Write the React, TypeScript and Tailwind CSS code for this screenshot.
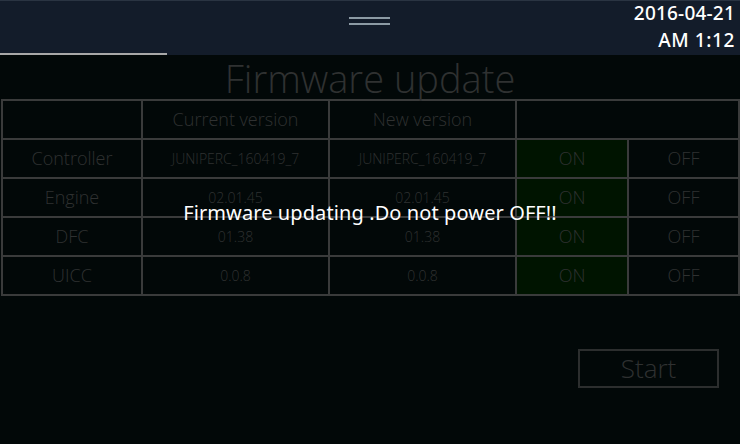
import React from "react";

const dim = "text-[#2f3131]";

function Cell({ children, className = "" }: { children?: React.ReactNode; className?: string }) {
  return (
    <div className={`flex items-center justify-center bg-[#020808] ${className}`}>{children}</div>
  );
}

const rows = [
  { name: "Controller", cur: "JUNIPERC_160419_7", next: "JUNIPERC_160419_7" },
  { name: "Engine", cur: "02.01.45", next: "02.01.45" },
  { name: "DFC", cur: "01.38", next: "01.38" },
  { name: "UICC", cur: "0.0.8", next: "0.0.8" },
];

export default function App() {
  return (
    <div
      className="relative w-[740px] h-[444px] overflow-hidden bg-[#020808]"
      style={{ fontFamily: '"Open Sans", "Noto Sans", sans-serif' }}
    >
      {/* header */}
      <div className="relative h-[55px] bg-[#131c2a] border-t border-[#2a3442]">
        <div className="absolute left-0 bottom-0 w-[167px] h-[2px] bg-[#a8a8a8]" />
        <div className="absolute left-[349px] top-[16px] flex flex-col gap-[4px]">
          <div className="w-[41px] h-[2px] bg-[#8c9aa4]" />
          <div className="w-[41px] h-[2px] bg-[#8c9aa4]" />
        </div>
        <div
          className="absolute right-[5px] top-[-1px] flex flex-col items-end text-white text-[19px] leading-[27px] font-medium tracking-[0.2px]"
          style={{ fontFamily: '"Noto Sans", sans-serif' }}
        >
          <span>2016-04-21</span>
          <span className="tracking-[0.6px]">AM 1:12</span>
        </div>
      </div>

      {/* title */}
      <div className={`h-[44px] flex items-center justify-center text-[38px] font-light ${dim}`}>
        <span className="mt-[2px]">Firmware update</span>
      </div>

      {/* table */}
      <div className="ml-[1px] w-[739px] grid grid-cols-[138px_185px_185px_110px_109px] auto-rows-[37px] gap-[2px] p-[2px] bg-[#3a3b3b]">
        <Cell />
        <Cell className={`text-[18px] font-light ${dim}`}>Current version</Cell>
        <Cell className={`text-[18px] font-light ${dim}`}>New version</Cell>
        <Cell className="col-span-2" />
        {rows.map((r) => (
          <React.Fragment key={r.name}>
            <Cell className={`text-[18px] font-light ${dim}`}>{r.name}</Cell>
            <Cell className={`text-[14px] font-light ${dim}`}>{r.cur}</Cell>
            <Cell className={`text-[14px] font-light ${dim}`}>{r.next}</Cell>
            <Cell className={`!bg-[#001400] text-[18px] font-light ${dim}`}>ON</Cell>
            <Cell className={`text-[18px] font-light ${dim}`}>OFF</Cell>
          </React.Fragment>
        ))}
      </div>

      {/* start button */}
      <div className="flex justify-end pr-[21px] mt-[53px]">
        <div className={`w-[141px] h-[39px] border-2 border-[#2c2e2e] flex items-center justify-center text-[26px] font-light ${dim}`}>
          Start
        </div>
      </div>

      {/* overlay message */}
      <div
        className="absolute left-0 right-0 top-[199px] flex justify-center text-white text-[20px] leading-[27px] tracking-[0.1px]"
        style={{ fontFamily: '"Noto Sans", sans-serif' }}
      >
        <span className="ml-[0px]">Firmware updating .Do not power OFF!!</span>
      </div>
    </div>
  );
}
